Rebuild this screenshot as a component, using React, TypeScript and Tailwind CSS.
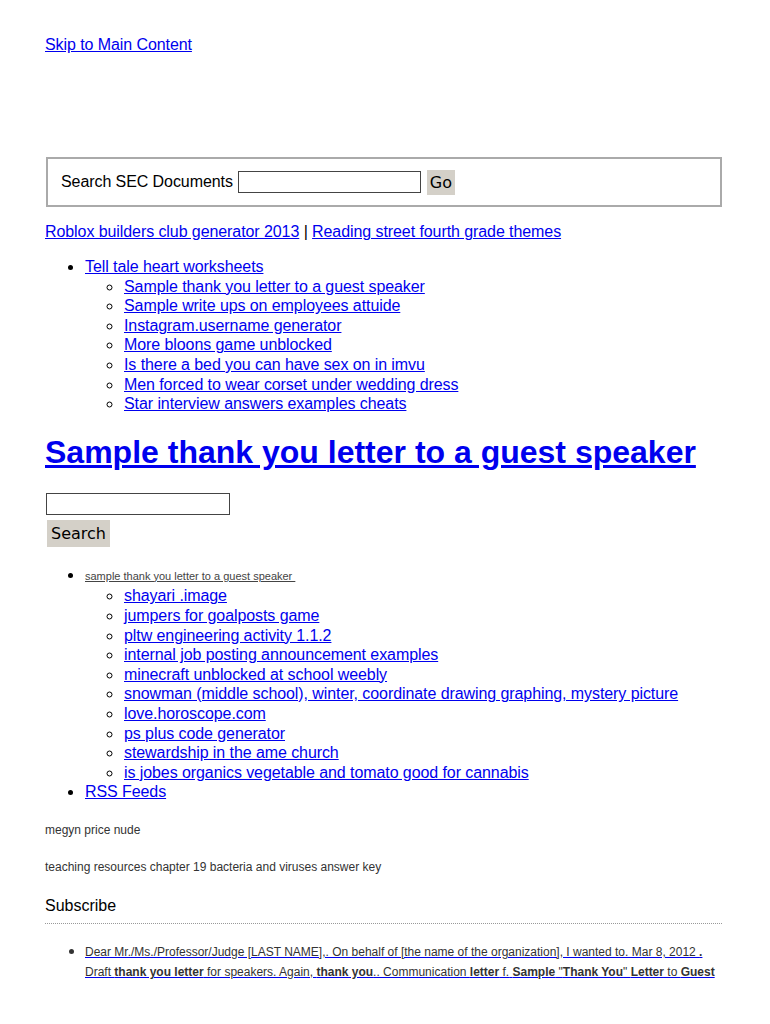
const TOP_LINKS = [
  "Sample thank you letter to a guest speaker",
  "Sample write ups on employees attuide",
  "Instagram.username generator",
  "More bloons game unblocked",
  "Is there a bed you can have sex on in imvu",
  "Men forced to wear corset under wedding dress",
  "Star interview answers examples cheats",
];

const SUB_LINKS = [
  "shayari .image",
  "jumpers for goalposts game",
  "pltw engineering activity 1.1.2",
  "internal job posting announcement examples",
  "minecraft unblocked at school weebly",
  "snowman (middle school), winter, coordinate drawing graphing, mystery picture",
  "love.horoscope.com",
  "ps plus code generator",
  "stewardship in the ame church",
  "is jobes organics vegetable and tomato good for cannabis",
];

function Link({ children }: { children: React.ReactNode }) {
  return (
    <a href="#" className="text-[#0000ee] underline">
      {children}
    </a>
  );
}

export default function App() {
  return (
    <div
      className="min-h-[1024px] bg-white text-black pl-[45px] pr-[48px] pt-[35px] text-[16px]"
      style={{ fontFamily: '"Liberation Sans", Arial, sans-serif' }}
    >
      <div className="leading-[20px] tracking-[-0.08px]">
        <Link>Skip to Main Content</Link>
      </div>

      {/* search box */}
      <div className="mt-[102px] ml-px h-[50px] border-2 border-[#aaa] flex items-center pl-[13px]">
        <span className="leading-[20px] mr-[5px] tracking-[-0.08px]">Search SEC Documents</span>
        <input type="text" className="w-[183px] h-[22px] border border-[#444] bg-white" />
        <button
          className="ml-[6px] h-[25px] px-[3px] bg-[#d4d0c8] text-[16px] leading-[25px]"
          style={{ fontFamily: '"DejaVu Sans", sans-serif' }}
        >
          Go
        </button>
      </div>

      <div className="mt-[15px] leading-[20px] tracking-[-0.08px]">
        <Link>Roblox builders club generator 2013</Link> | <Link>Reading street fourth grade themes</Link>
      </div>

      <ul className="mt-[15px] list-disc pl-[40px] leading-[19.6px] tracking-[-0.08px] marker:text-[18px]">
        <li>
          <Link>Tell tale heart worksheets</Link>
          <ul className="list-[circle] pl-[39px]">
            {TOP_LINKS.map((t) => (
              <li key={t}>
                <Link>{t}</Link>
              </li>
            ))}
          </ul>
        </li>
      </ul>

      <h1 className="mt-[20px] text-[32px] font-bold leading-[37px]">
        <Link>Sample thank you letter to a guest speaker</Link>
      </h1>

      <div className="mt-[22px] ml-px">
        <input type="text" className="block w-[184px] h-[22px] border border-[#444] bg-white" />
        <button
          className="block mt-[5px] ml-[1px] h-[27px] px-[4px] bg-[#d4d0c8] text-[16px] leading-[27px]"
          style={{ fontFamily: '"DejaVu Sans", sans-serif' }}
        >
          Search
        </button>
      </div>

      <ul className="mt-[18px] list-disc pl-[40px] leading-[19.6px] tracking-[-0.08px] marker:text-[18px]">
        <li>
          <a href="#" className="text-[11px] text-[#444] underline tracking-normal">
            sample thank you letter to a guest speaker&nbsp;
          </a>
          <ul className="list-[circle] pl-[39px] text-[16px]">
            {SUB_LINKS.map((t) => (
              <li key={t}>
                <Link>{t}</Link>
              </li>
            ))}
          </ul>
        </li>
        <li>
          <Link>RSS Feeds</Link>
        </li>
      </ul>

      <p className="mt-[20px] text-[12px] leading-[16px] text-[#333]">megyn price nude</p>
      <p className="mt-[21px] text-[12px] leading-[16px] text-[#333]">
        teaching resources chapter 19 bacteria and viruses answer key
      </p>

      <h3 className="mt-[21px] leading-[20px] pb-[7px] border-b border-dotted border-[#999]">Subscribe</h3>

      <ul className="mt-[17px] list-disc pl-[40px] text-[12px] leading-[20px] text-[#333] marker:text-[16px]">
        <li>
          <a href="#" className="underline decoration-[#0000ee]">
            Dear Mr./Ms./Professor/Judge [LAST NAME],. On behalf of [the name of the organization], I wanted to. Mar
            8, 2012 <b>.</b>
            <br />
            Draft <b>thank you letter</b> for speakers. Again, <b>thank you</b>.. Communication <b>letter</b> f.{" "}
            <b>Sample</b> "<b>Thank You</b>" <b>Letter</b> to <b>Guest</b>
          </a>
        </li>
      </ul>
    </div>
  );
}
